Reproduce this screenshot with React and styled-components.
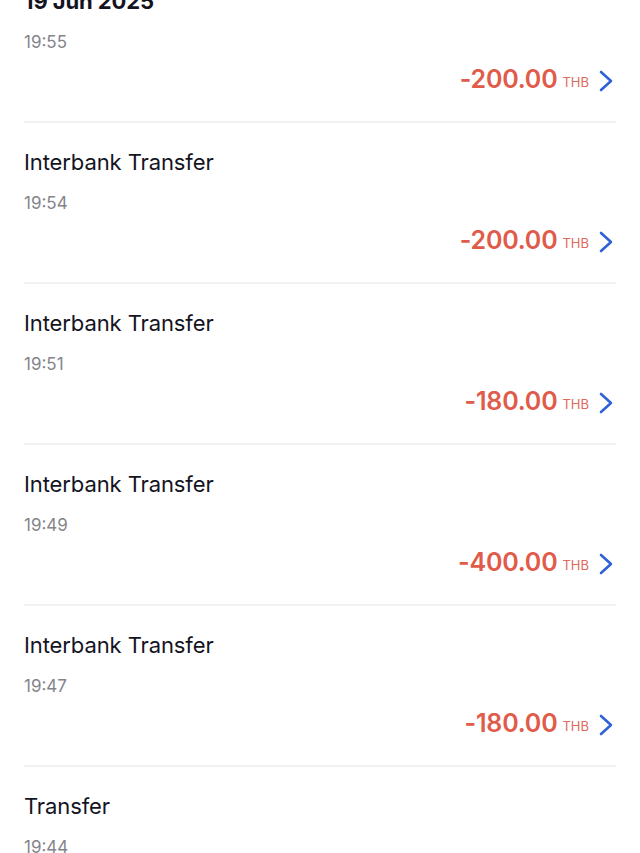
import React from 'react';
import styled, { createGlobalStyle } from 'styled-components';

const GlobalStyle = createGlobalStyle`
  html, body {
    margin: 0;
    padding: 0;
    background: #ffffff;
    overflow: hidden;
  }
  body {
    font-family: Inter, "Noto Sans", sans-serif;
    -webkit-font-smoothing: antialiased;
  }
`;

const transactions = [
  { title: '19 Jun 2025', time: '19:55', amount: '-200.00', header: true },
  { title: 'Interbank Transfer', time: '19:54', amount: '-200.00' },
  { title: 'Interbank Transfer', time: '19:51', amount: '-180.00' },
  { title: 'Interbank Transfer', time: '19:49', amount: '-400.00' },
  { title: 'Interbank Transfer', time: '19:47', amount: '-180.00' },
  { title: 'Transfer', time: '19:44', amount: '-150.00' },
];

const Screen = styled.div`
  width: 640px;
  height: 853px;
  overflow: hidden;
  background: #fff;
`;

// list is scrolled so the first date header sits partly above the viewport
const List = styled.ul`
  list-style: none;
  margin: -38px 0 0;
  padding: 0 24px;
`;

const Row = styled.li`
  display: flex;
  flex-direction: column;
  padding: 25px 0 26px;
  border-bottom: 2px solid #f1f1f3;
`;

const Title = styled.div`
  font-size: 22px;
  line-height: 28px;
  color: #14141f;
  font-weight: ${(p) => (p.$bold ? 700 : 400)};
  letter-spacing: -0.1px;
`;

const Time = styled.div`
  margin-top: 17px;
  font-size: 17px;
  line-height: 20px;
  color: #84848b;
`;

const AmountLine = styled.div`
  margin-top: 11px;
  display: flex;
  align-items: center;
  justify-content: flex-end;
  height: 32px;
`;

const Amount = styled.span`
  font-size: 25px;
  font-weight: 600;
  color: #e05b4a;
  letter-spacing: -0.2px;
`;

const Currency = styled.span`
  margin-left: 5px;
  margin-top: 6px;
  font-size: 13px;
  color: #dd6a5c;
`;

const Chevron = styled.svg`
  margin-left: 8px;
  margin-right: 1px;
  margin-top: 4px;
  flex: none;
`;

const ArrowIcon = () => (
  <Chevron width="18" height="22" viewBox="0 0 18 22" fill="none">
    <path d="M4 2 L14 11 L4 20" stroke="#2f62d8" strokeWidth="2.6" strokeLinecap="round" strokeLinejoin="round" />
  </Chevron>
);

export default function App() {
  return (
    <Screen>
      <GlobalStyle />
      <List>
        {transactions.map((t, i) => (
          <Row key={i}>
            <Title $bold={t.header}>{t.title}</Title>
            <Time>{t.time}</Time>
            <AmountLine>
              <Amount>{t.amount}</Amount>
              <Currency>THB</Currency>
              <ArrowIcon />
            </AmountLine>
          </Row>
        ))}
      </List>
    </Screen>
  );
}
